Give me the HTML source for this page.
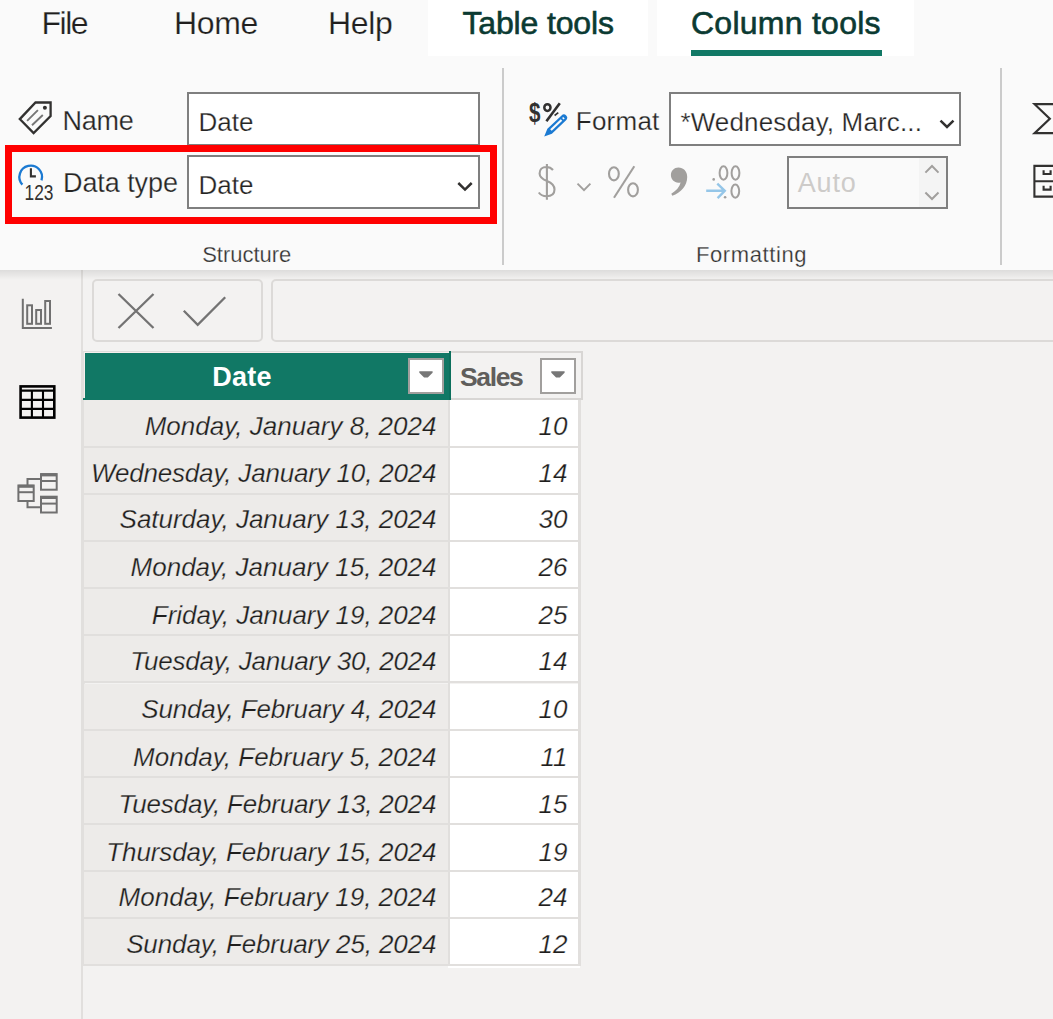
<!DOCTYPE html>
<html><head><meta charset="utf-8">
<style>
*{margin:0;padding:0;box-sizing:border-box}
html,body{width:1053px;height:1019px;overflow:hidden;background:#f3f2f1;font-family:"Liberation Sans",sans-serif;color:#252423}
.abs{position:absolute}
.t{position:absolute;white-space:nowrap;line-height:1}
.it{font-style:italic;font-size:26px;color:#1f1e1d}
svg{position:absolute;overflow:visible}
</style></head><body>
<div class="abs" style="left:0;top:0;width:1053px;height:270px;background:#fafafa"></div>
<div class="abs" style="left:428px;top:0;width:220px;height:56px;background:#fff"></div>
<div class="abs" style="left:657px;top:0;width:257px;height:56px;background:#fff"></div>
<div class="abs" style="left:691px;top:50px;width:191px;height:6px;background:#117865"></div>
<div class="t" style="left:41.60px;top:6.91px;font-size:32px;letter-spacing:-1.533px;color:#201f1e;-webkit-text-stroke:0.25px #fafafa">File</div>
<div class="t" style="left:174.00px;top:6.91px;font-size:32px;letter-spacing:-0.333px;color:#201f1e;-webkit-text-stroke:0.25px #fafafa">Home</div>
<div class="t" style="left:328.00px;top:6.91px;font-size:32px;letter-spacing:-0.333px;color:#201f1e;-webkit-text-stroke:0.25px #fafafa">Help</div>
<div class="t" style="left:462.40px;top:6.91px;font-size:32px;letter-spacing:-0.140px;color:#0b3a32;-webkit-text-stroke:0.6px #0b3a32">Table tools</div>
<div class="t" style="left:691.00px;top:6.91px;font-size:32px;letter-spacing:0.255px;color:#0b3a32;-webkit-text-stroke:0.6px #0b3a32">Column tools</div>
<div class="abs" style="left:502px;top:68px;width:2px;height:197px;background:#cbcbcb"></div>
<div class="abs" style="left:1000px;top:68px;width:2px;height:197px;background:#cbcbcb"></div>

<div class="t" style="left:62.40px;top:107.84px;font-size:27px;letter-spacing:-0.200px;color:#252423;-webkit-text-stroke:0.25px #fafafa">Name</div>
<div class="abs" style="left:187px;top:92px;width:293px;height:54px;background:#fff;border:2px solid #7f7f7f"></div>
<div class="t" style="left:198.60px;top:108.69px;font-size:26px;letter-spacing:0.000px;color:#252423;-webkit-text-stroke:0.25px #fff">Date</div>
<div class="t" style="left:63.00px;top:170.34px;font-size:27px;letter-spacing:-0.075px;color:#252423;-webkit-text-stroke:0.25px #fafafa">Data type</div>
<div class="abs" style="left:187px;top:155px;width:293px;height:54px;background:#fff;border:2px solid #7f7f7f"></div>
<div class="t" style="left:198.60px;top:171.99px;font-size:26px;letter-spacing:0.000px;color:#252423;-webkit-text-stroke:0.25px #fff">Date</div>
<div class="abs" style="left:5px;top:145px;width:492px;height:79px;border:7px solid #ff0000"></div>
<div class="t" style="left:202.20px;top:244.37px;font-size:22px;letter-spacing:-0.025px;color:#323130;-webkit-text-stroke:0.25px #fafafa">Structure</div>

<div class="t" style="left:575.80px;top:107.99px;font-size:26px;letter-spacing:0.240px;color:#252423;-webkit-text-stroke:0.25px #fafafa">Format</div>
<div class="abs" style="left:669px;top:92px;width:292px;height:54px;background:#fff;border:2px solid #7f7f7f"></div>
<div class="t" style="left:680.40px;top:108.59px;font-size:26px;letter-spacing:0.144px;color:#252423;-webkit-text-stroke:0.25px #fff">*Wednesday, Marc...</div>
<div class="abs" style="left:787px;top:156px;width:161px;height:53px;background:#fafafa;border:2px solid #7f7f7f"></div>
<div class="abs" style="left:919px;top:158px;width:27px;height:49px;background:#f4f4f4"></div>
<div class="t" style="left:797.80px;top:170.34px;font-size:27px;letter-spacing:0.800px;color:#cdcbc9">Auto</div>
<div class="t" style="left:696.00px;top:244.37px;font-size:22px;letter-spacing:0.600px;color:#323130;-webkit-text-stroke:0.25px #fafafa">Formatting</div>

<div class="abs" style="left:81px;top:270px;width:2px;height:749px;background:#e1dfdd"></div>
<div class="abs" style="left:0;top:270px;width:1053px;height:10px;background:linear-gradient(rgba(0,0,0,0.09),rgba(0,0,0,0))"></div>
<div class="abs" style="left:92px;top:279px;width:171px;height:63px;border:2px solid #dcdad8;border-radius:5px"></div>
<div class="abs" style="left:271px;top:279px;width:800px;height:63px;border:2px solid #dcdad8;border-radius:5px"></div>

<div class="abs" style="left:83px;top:351px;width:368px;height:1px;background:#dedcda"></div>
<div class="abs" style="left:84px;top:352px;width:367px;height:1px;background:#f5efed"></div>
<div class="abs" style="left:83px;top:351px;width:1px;height:615px;background:#e1dfdd"></div>
<div class="abs" style="left:84px;top:352px;width:1px;height:46px;background:#f5efed"></div>
<div class="abs" style="left:85px;top:353px;width:366px;height:47px;background:#117865"></div>
<div class="abs" style="left:83px;top:398px;width:2px;height:2px;background:#117865"></div>
<div class="abs" style="left:449px;top:351px;width:2px;height:49px;background:#0c6f5c"></div>
<div class="t" style="left:212.20px;top:363.84px;font-size:27px;letter-spacing:0.267px;color:#fff;font-weight:bold">Date</div>
<div class="abs" style="left:408px;top:358px;width:36px;height:36px;background:#fff;border:2px solid #a19f9d"></div>
<div class="abs" style="left:451px;top:351px;width:132px;height:49px;border:2px solid #d8d6d4;border-left:none"></div>
<div class="t" style="left:460.00px;top:363.56px;font-size:26.5px;letter-spacing:-1.350px;color:#605e5c;font-weight:bold">Sales</div>
<div class="abs" style="left:540px;top:358px;width:36px;height:36px;background:#fff;border:2px solid #a19f9d"></div>
<div class="abs" style="left:448px;top:400px;width:2px;height:566px;background:#e1dfdd"></div>
<div class="abs" style="left:578px;top:400px;width:3px;height:566px;background:#e1dfdd"></div>
<div class="abs" style="left:84px;top:400px;width:1px;height:566px;background:#e6e4e2"></div>
<div class="abs" style="left:84px;top:400px;width:364px;height:46px;background:#edebe9"></div>
<div class="abs" style="left:450px;top:400px;width:128px;height:46px;background:#fff"></div>
<div class="abs" style="left:84px;top:446px;width:494px;height:2px;background:#e1dfdd"></div>
<div class="t it" style="right:616.48px;top:412.99px;letter-spacing:0.018px;-webkit-text-stroke:0.25px #edebe9">Monday, January 8, 2024</div>
<div class="t it" style="right:485.50px;top:412.99px;-webkit-text-stroke:0.25px #fff">10</div>
<div class="abs" style="left:84px;top:448px;width:364px;height:45px;background:#edebe9"></div>
<div class="abs" style="left:450px;top:448px;width:128px;height:45px;background:#fff"></div>
<div class="abs" style="left:84px;top:493px;width:494px;height:2px;background:#e1dfdd"></div>
<div class="t it" style="right:616.68px;top:459.79px;letter-spacing:-0.185px;-webkit-text-stroke:0.25px #edebe9">Wednesday, January 10, 2024</div>
<div class="t it" style="right:485.50px;top:459.79px;-webkit-text-stroke:0.25px #fff">14</div>
<div class="abs" style="left:84px;top:495px;width:364px;height:45px;background:#edebe9"></div>
<div class="abs" style="left:450px;top:495px;width:128px;height:45px;background:#fff"></div>
<div class="abs" style="left:84px;top:540px;width:494px;height:2px;background:#e1dfdd"></div>
<div class="t it" style="right:616.52px;top:506.39px;letter-spacing:-0.024px;-webkit-text-stroke:0.25px #edebe9">Saturday, January 13, 2024</div>
<div class="t it" style="right:485.50px;top:506.39px;-webkit-text-stroke:0.25px #fff">30</div>
<div class="abs" style="left:84px;top:542px;width:364px;height:45px;background:#edebe9"></div>
<div class="abs" style="left:450px;top:542px;width:128px;height:45px;background:#fff"></div>
<div class="abs" style="left:84px;top:587px;width:494px;height:2px;background:#e1dfdd"></div>
<div class="t it" style="right:616.50px;top:553.69px;letter-spacing:0.000px;-webkit-text-stroke:0.25px #edebe9">Monday, January 15, 2024</div>
<div class="t it" style="right:485.50px;top:553.69px;-webkit-text-stroke:0.25px #fff">26</div>
<div class="abs" style="left:84px;top:589px;width:364px;height:45px;background:#edebe9"></div>
<div class="abs" style="left:450px;top:589px;width:128px;height:45px;background:#fff"></div>
<div class="abs" style="left:84px;top:634px;width:494px;height:2px;background:#e1dfdd"></div>
<div class="t it" style="right:616.54px;top:601.69px;letter-spacing:-0.043px;-webkit-text-stroke:0.25px #edebe9">Friday, January 19, 2024</div>
<div class="t it" style="right:485.50px;top:601.69px;-webkit-text-stroke:0.25px #fff">25</div>
<div class="abs" style="left:84px;top:636px;width:364px;height:45px;background:#edebe9"></div>
<div class="abs" style="left:450px;top:636px;width:128px;height:45px;background:#fff"></div>
<div class="abs" style="left:84px;top:681px;width:494px;height:2px;background:#e1dfdd"></div>
<div class="t it" style="right:616.71px;top:648.39px;letter-spacing:-0.208px;-webkit-text-stroke:0.25px #edebe9">Tuesday, January 30, 2024</div>
<div class="t it" style="right:485.50px;top:648.39px;-webkit-text-stroke:0.25px #fff">14</div>
<div class="abs" style="left:84px;top:684px;width:364px;height:45px;background:#edebe9"></div>
<div class="abs" style="left:450px;top:684px;width:128px;height:45px;background:#fff"></div>
<div class="abs" style="left:84px;top:729px;width:494px;height:2px;background:#e1dfdd"></div>
<div class="t it" style="right:616.65px;top:696.49px;letter-spacing:-0.148px;-webkit-text-stroke:0.25px #edebe9">Sunday, February 4, 2024</div>
<div class="t it" style="right:485.50px;top:696.49px;-webkit-text-stroke:0.25px #fff">10</div>
<div class="abs" style="left:84px;top:731px;width:364px;height:45px;background:#edebe9"></div>
<div class="abs" style="left:450px;top:731px;width:128px;height:45px;background:#fff"></div>
<div class="abs" style="left:84px;top:776px;width:494px;height:2px;background:#e1dfdd"></div>
<div class="t it" style="right:616.48px;top:743.59px;letter-spacing:0.017px;-webkit-text-stroke:0.25px #edebe9">Monday, February 5, 2024</div>
<div class="t it" style="right:485.50px;top:743.59px;-webkit-text-stroke:0.25px #fff">11</div>
<div class="abs" style="left:84px;top:778px;width:364px;height:45px;background:#edebe9"></div>
<div class="abs" style="left:450px;top:778px;width:128px;height:45px;background:#fff"></div>
<div class="abs" style="left:84px;top:823px;width:494px;height:2px;background:#e1dfdd"></div>
<div class="t it" style="right:616.69px;top:791.49px;letter-spacing:-0.192px;-webkit-text-stroke:0.25px #edebe9">Tuesday, February 13, 2024</div>
<div class="t it" style="right:485.50px;top:791.49px;-webkit-text-stroke:0.25px #fff">15</div>
<div class="abs" style="left:84px;top:825px;width:364px;height:45px;background:#edebe9"></div>
<div class="abs" style="left:450px;top:825px;width:128px;height:45px;background:#fff"></div>
<div class="abs" style="left:84px;top:870px;width:494px;height:2px;background:#e1dfdd"></div>
<div class="t it" style="right:616.62px;top:838.69px;letter-spacing:-0.123px;-webkit-text-stroke:0.25px #edebe9">Thursday, February 15, 2024</div>
<div class="t it" style="right:485.50px;top:838.69px;-webkit-text-stroke:0.25px #fff">19</div>
<div class="abs" style="left:84px;top:872px;width:364px;height:45px;background:#edebe9"></div>
<div class="abs" style="left:450px;top:872px;width:128px;height:45px;background:#fff"></div>
<div class="abs" style="left:84px;top:917px;width:494px;height:2px;background:#e1dfdd"></div>
<div class="t it" style="right:616.48px;top:883.99px;letter-spacing:0.017px;-webkit-text-stroke:0.25px #edebe9">Monday, February 19, 2024</div>
<div class="t it" style="right:485.50px;top:883.99px;-webkit-text-stroke:0.25px #fff">24</div>
<div class="abs" style="left:84px;top:919px;width:364px;height:45px;background:#edebe9"></div>
<div class="abs" style="left:450px;top:919px;width:128px;height:45px;background:#fff"></div>
<div class="abs" style="left:84px;top:964px;width:494px;height:2px;background:#e1dfdd"></div>
<div class="t it" style="right:616.62px;top:930.99px;letter-spacing:-0.117px;-webkit-text-stroke:0.25px #edebe9">Sunday, February 25, 2024</div>
<div class="t it" style="right:485.50px;top:930.99px;-webkit-text-stroke:0.25px #fff">12</div>
<div class="abs" style="left:448px;top:966px;width:132px;height:2px;background:#fff"></div>

<!-- tag icon -->
<svg style="left:0;top:0" width="1053" height="270">
 <path d="M35.5,102.5 H50.6 V116 L33.6,133 L19.8,119.1 Z" fill="none" stroke="#323130" stroke-width="2.3" stroke-linejoin="miter"/>
 <circle cx="44.9" cy="107.7" r="2" fill="#323130"/>
 <path d="M27.1,120.9 L37.9,110.1 M32,125.2 L42.8,115" stroke="#767676" stroke-width="1.9"/>
 <!-- clock -->
 <path d="M22.4,184.6 A11.3,11.3 0 1 1 41.5,180.3" fill="none" stroke="#1b7ad2" stroke-width="2.3"/>
 <path d="M30.9,168.3 V176.4 H35.9" fill="none" stroke="#323130" stroke-width="2.1"/>
 <text transform="translate(24.6,199.9) scale(0.78,1)" font-size="22.2" font-family="Liberation Sans" fill="#323130">123</text>
 <!-- chevron datatype -->
 <path d="M458.3,183 L465,189.6 L471.7,183" fill="none" stroke="#323130" stroke-width="2.5"/>
 <!-- chevron format -->
 <path d="M940.5,120.6 L947,127 L953.5,120.6" fill="none" stroke="#323130" stroke-width="2.5"/>
 <!-- $% pencil -->
 <text transform="translate(529.1,121.8) scale(0.756,1)" font-size="27.2" font-weight="bold" font-family="Liberation Sans" fill="#323130">$</text>
 <ellipse cx="547.4" cy="107.6" rx="3.1" ry="3.4" fill="none" stroke="#323130" stroke-width="2.5"/>
 <path d="M559.8,103.2 L546.4,121.2" stroke="#323130" stroke-width="2.6"/>
 <path d="M558.3,112.6 L554.6,115.5" stroke="#323130" stroke-width="1.6"/>
 <g transform="translate(544.2,136.4) rotate(-43.4)">
  <path d="M0,0 L7.5,-3.3 H27 A3.3,3.3 0 0 1 27,3.3 H7.5 Z" fill="#1b7ad2"/>
  <rect x="9.3" y="-1.1" width="14.5" height="2.2" fill="#fafafa"/>
  <rect x="25.6" y="-1.1" width="1.6" height="2.2" fill="#fafafa"/>
 </g>
 <!-- row 2 formatting -->
 <path d="M553,170 C551,167.6 549,167 546.5,167 C542,167 539.6,169.8 539.6,173.5 C539.6,177.6 542.3,179.2 547,181 C552,183 554.5,185.2 554.5,189.5 C554.5,194 551.5,196.2 546.5,196.2 C543,196.2 540.5,195 538.8,192.5 M546.9,163.9 V199.7" fill="none" stroke="#a19f9d" stroke-width="2.1"/>
 <path d="M577.5,183.6 L584,190.2 L590.4,183.6" fill="none" stroke="#a19f9d" stroke-width="1.9"/>
 <ellipse cx="613.9" cy="173.8" rx="4.9" ry="6.6" fill="none" stroke="#a19f9d" stroke-width="2.1"/>
 <ellipse cx="633" cy="189.8" rx="4.9" ry="6.6" fill="none" stroke="#a19f9d" stroke-width="2.1"/>
 <path d="M634.3,166.2 L614,197.8" stroke="#a19f9d" stroke-width="2.1"/>
 <path d="M678.4,167.6 C683.3,167.6 687.2,171.2 687.2,177 C687.2,186 681,192.5 672.3,195.8 L671.3,193.8 C676.3,190.6 679.5,187 680.6,182.5 C679.9,182.6 679.1,182.7 678.4,182.7 C674.2,182.7 670.9,179.3 670.9,175.1 C670.9,170.9 674.2,167.6 678.4,167.6 Z" fill="#a19f9d"/>
 <circle cx="713.7" cy="179.4" r="1.3" fill="#a19f9d"/>
 <ellipse cx="723.5" cy="173" rx="3.9" ry="6.7" fill="none" stroke="#a19f9d" stroke-width="2"/>
 <ellipse cx="735.5" cy="173" rx="3.9" ry="6.7" fill="none" stroke="#a19f9d" stroke-width="2"/>
 <circle cx="725.1" cy="197.3" r="1.3" fill="#a19f9d"/>
 <ellipse cx="735.3" cy="191.1" rx="3.9" ry="6.6" fill="none" stroke="#a19f9d" stroke-width="2"/>
 <path d="M706.2,190.8 H724.5 M717.3,183.6 L724.8,190.8 L717.6,198.2" fill="none" stroke="#95c6e8" stroke-width="2.4"/>
 <!-- spin chevrons -->
 <path d="M925.4,172.6 L932,166 L938.5,172.6" fill="none" stroke="#a19f9d" stroke-width="2"/>
 <path d="M925.4,192.5 L932,199 L938.5,192.5" fill="none" stroke="#a19f9d" stroke-width="2"/>
 <!-- sigma -->
 <path d="M1053,104.2 H1034.6 L1049.8,118.7 L1034.6,133.2 H1053" fill="none" stroke="#323130" stroke-width="2.2" stroke-linejoin="miter"/>
 <!-- second icon -->
 <path d="M1053,165.9 H1034.4 V196.6 H1053 M1034.4,181.3 H1053 M1043.6,170.2 V174 H1050.6 V170.2 M1043.6,185.8 V189.6 H1050.6 V185.8" fill="none" stroke="#323130" stroke-width="2.1"/>
</svg>
<svg style="left:0;top:270px" width="1053" height="749">
 <g transform="translate(0,-270)">
 <!-- bar chart -->
 <path d="M22.8,298.8 V327.9 H51.9" fill="none" stroke="#707070" stroke-width="2"/>
 <rect x="27.2" y="305.3" width="4.8" height="18.5" fill="none" stroke="#707070" stroke-width="2"/>
 <rect x="36.2" y="310" width="4.8" height="13.8" fill="none" stroke="#707070" stroke-width="2"/>
 <rect x="45.2" y="301" width="4.8" height="22.8" fill="none" stroke="#707070" stroke-width="2"/>
 <!-- table icon -->
 <rect x="20.6" y="386.4" width="33.7" height="31.2" fill="none" stroke="#000" stroke-width="2.6"/>
 <path d="M20.6,390.6 H54.3 M20.6,399.9 H54.3 M20.6,408.9 H54.3 M31.9,390.6 V417.6 M43,390.6 V417.6" fill="none" stroke="#000" stroke-width="2.1"/>
 <!-- model icon -->
 <g fill="none" stroke="#707070" stroke-width="2">
  <rect x="18.4" y="485.5" width="15.3" height="15.5"/>
  <path d="M18.4,486.3 H33.7" stroke-width="3"/>
  <path d="M18.4,492.2 H33.7"/>
  <rect x="41" y="474.1" width="15.7" height="15.6"/>
  <path d="M41,474.9 H56.7" stroke-width="3"/>
  <path d="M41,481 H56.7"/>
  <rect x="41" y="496.7" width="15.7" height="15.8"/>
  <path d="M41,497.5 H56.7" stroke-width="3"/>
  <path d="M41,503.6 H56.7"/>
  <path d="M27.5,485.5 V479 H41 M27.5,501 V507.3 H41"/>
 </g>
 <!-- X and check -->
 <path d="M118.5,294 L153.5,328 M153.5,294 L118.5,328" stroke="#737373" stroke-width="2.3"/>
 <path d="M183.8,310.8 L197.7,324.8 L225.2,297.3" fill="none" stroke="#737373" stroke-width="2.3"/>
 <!-- filter triangles -->
 <path d="M419.3,371.2 H432.6 V372.8 L427.8,377.6 H424.1 L419.3,372.8 Z" fill="#777777"/>
 <path d="M551.3,371.2 H564.6 V372.8 L559.8,377.6 H556.1 L551.3,372.8 Z" fill="#777777"/>
 </g>
</svg>

</body></html>
